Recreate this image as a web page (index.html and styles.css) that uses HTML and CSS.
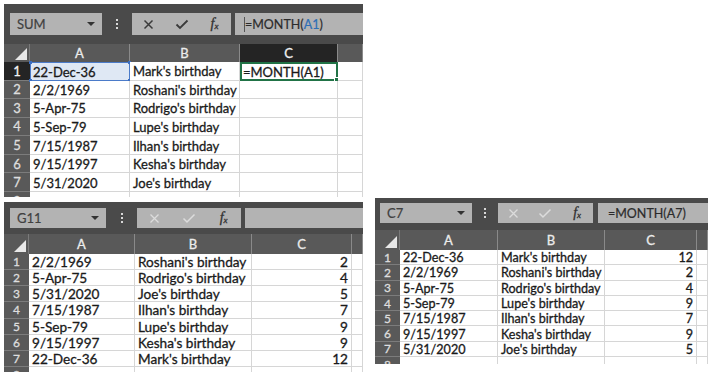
FILE: index.html
```html
<!DOCTYPE html>
<html>
<head>
<meta charset="utf-8">
<link rel="stylesheet" href="styles.css">
</head>
<body>
<div class="page">
  <div class="col-left">
    <!-- Sheet 1 -->
    <div class="sheet s1">
      <div class="fbar">
        <div class="namebox"><span>SUM</span><span class="caret"></span></div>
        <div class="dots"><i></i><i></i><i></i></div>
        <div class="btns">
          <svg class="ico" width="11" height="11" viewBox="0 0 11 11"><path d="M1.5 1.5L9.5 9.5M9.5 1.5L1.5 9.5" stroke="currentColor" stroke-width="1.5" fill="none"/></svg>
          <svg class="ico" width="14" height="11" viewBox="0 0 14 11"><path d="M1.5 5.5L5 9L12.5 1.5" stroke="currentColor" stroke-width="1.8" fill="none"/></svg>
          <span class="fx">f<sub>x</sub></span>
        </div>
        <div class="finput"><span class="cursor"></span>=MONTH(<span class="ref">A1</span>)</div>
      </div>
      <div class="grid">
        <div class="corner"><svg width="12" height="12" viewBox="0 0 12 12"><polygon points="12,0 12,12 0,12" fill="#e8e8e8"/></svg></div>
        <div class="ch">A</div><div class="ch">B</div><div class="ch sel">C</div><div class="ch"></div>

        <div class="rh sel">1</div><div class="c refcell">22-Dec-36<i class="h tl"></i><i class="h tr"></i><i class="h bl"></i><i class="h br"></i></div><div class="c">Mark's birthday</div><div class="c active">=MONTH(A1)<i class="handle"></i></div><div class="c"></div>
        <div class="rh">2</div><div class="c">2/2/1969</div><div class="c">Roshani's birthday</div><div class="c"></div><div class="c"></div>
        <div class="rh">3</div><div class="c">5-Apr-75</div><div class="c">Rodrigo's birthday</div><div class="c"></div><div class="c"></div>
        <div class="rh">4</div><div class="c">5-Sep-79</div><div class="c">Lupe's birthday</div><div class="c"></div><div class="c"></div>
        <div class="rh">5</div><div class="c">7/15/1987</div><div class="c">Ilhan's birthday</div><div class="c"></div><div class="c"></div>
        <div class="rh">6</div><div class="c">9/15/1997</div><div class="c">Kesha's birthday</div><div class="c"></div><div class="c"></div>
        <div class="rh">7</div><div class="c">5/31/2020</div><div class="c">Joe's birthday</div><div class="c"></div><div class="c"></div>
        <div class="rh">8</div><div class="c"></div><div class="c"></div><div class="c"></div><div class="c"></div>
      </div>
    </div>

    <!-- Sheet 2 -->
    <div class="sheet s2">
      <div class="fbar">
        <div class="namebox"><span>G11</span><span class="caret"></span></div>
        <div class="dots"><i></i><i></i><i></i></div>
        <div class="btns dis">
          <svg class="ico" width="11" height="11" viewBox="0 0 11 11"><path d="M1.5 1.5L9.5 9.5M9.5 1.5L1.5 9.5" stroke="currentColor" stroke-width="1.3" fill="none"/></svg>
          <svg class="ico" width="14" height="11" viewBox="0 0 14 11"><path d="M1.5 5.5L5 9L12.5 1.5" stroke="currentColor" stroke-width="1.5" fill="none"/></svg>
          <span class="fx">f<sub>x</sub></span>
        </div>
        <div class="finput"></div>
      </div>
      <div class="grid">
        <div class="corner"><svg width="12" height="12" viewBox="0 0 12 12"><polygon points="12,0 12,12 0,12" fill="#e8e8e8"/></svg></div>
        <div class="ch">A</div><div class="ch">B</div><div class="ch">C</div><div class="ch"></div>

        <div class="rh">1</div><div class="c">2/2/1969</div><div class="c">Roshani's birthday</div><div class="c num">2</div><div class="c"></div>
        <div class="rh">2</div><div class="c">5-Apr-75</div><div class="c">Rodrigo's birthday</div><div class="c num">4</div><div class="c"></div>
        <div class="rh">3</div><div class="c">5/31/2020</div><div class="c">Joe's birthday</div><div class="c num">5</div><div class="c"></div>
        <div class="rh">4</div><div class="c">7/15/1987</div><div class="c">Ilhan's birthday</div><div class="c num">7</div><div class="c"></div>
        <div class="rh">5</div><div class="c">5-Sep-79</div><div class="c">Lupe's birthday</div><div class="c num">9</div><div class="c"></div>
        <div class="rh">6</div><div class="c">9/15/1997</div><div class="c">Kesha's birthday</div><div class="c num">9</div><div class="c"></div>
        <div class="rh">7</div><div class="c">22-Dec-36</div><div class="c">Mark's birthday</div><div class="c num">12</div><div class="c"></div>
        <div class="rh">8</div><div class="c"></div><div class="c"></div><div class="c"></div><div class="c"></div>
      </div>
    </div>
  </div>

  <div class="col-right">
    <!-- Sheet 3 -->
    <div class="sheet s3">
      <div class="fbar">
        <div class="namebox"><span>C7</span><span class="caret"></span></div>
        <div class="dots"><i></i><i></i><i></i></div>
        <div class="btns dis">
          <svg class="ico" width="11" height="11" viewBox="0 0 11 11"><path d="M1.5 1.5L9.5 9.5M9.5 1.5L1.5 9.5" stroke="currentColor" stroke-width="1.3" fill="none"/></svg>
          <svg class="ico" width="14" height="11" viewBox="0 0 14 11"><path d="M1.5 5.5L5 9L12.5 1.5" stroke="currentColor" stroke-width="1.5" fill="none"/></svg>
          <span class="fx">f<sub>x</sub></span>
        </div>
        <div class="finput">=MONTH(A7)</div>
      </div>
      <div class="grid">
        <div class="corner"><svg width="12" height="12" viewBox="0 0 12 12"><polygon points="12,0 12,12 0,12" fill="#e8e8e8"/></svg></div>
        <div class="ch">A</div><div class="ch">B</div><div class="ch">C</div><div class="ch"></div>

        <div class="rh">1</div><div class="c">22-Dec-36</div><div class="c">Mark's birthday</div><div class="c num">12</div><div class="c"></div>
        <div class="rh">2</div><div class="c">2/2/1969</div><div class="c">Roshani's birthday</div><div class="c num">2</div><div class="c"></div>
        <div class="rh">3</div><div class="c">5-Apr-75</div><div class="c">Rodrigo's birthday</div><div class="c num">4</div><div class="c"></div>
        <div class="rh">4</div><div class="c">5-Sep-79</div><div class="c">Lupe's birthday</div><div class="c num">9</div><div class="c"></div>
        <div class="rh">5</div><div class="c">7/15/1987</div><div class="c">Ilhan's birthday</div><div class="c num">7</div><div class="c"></div>
        <div class="rh">6</div><div class="c">9/15/1997</div><div class="c">Kesha's birthday</div><div class="c num">9</div><div class="c"></div>
        <div class="rh">7</div><div class="c">5/31/2020</div><div class="c">Joe's birthday</div><div class="c num">5</div><div class="c"></div>
        <div class="rh">8</div><div class="c"></div><div class="c"></div><div class="c"></div><div class="c"></div>
      </div>
    </div>
  </div>
</div>
</body>
</html>
```

FILE: styles.css
```css
* { box-sizing: border-box; }
html, body { margin: 0; padding: 0; background: #ffffff; }
body { font-family: Lato, "Open Sans", sans-serif; }

.page {
  display: flex;
  gap: 12px;
  padding: 4px 0 0 4px;
}
.col-left { display: flex; flex-direction: column; gap: 5px; width: 359px; }
.col-right { width: 333px; padding-top: 194px; }

.sheet {
  background: #4a4a4a;
  overflow: hidden;
  color: #1a1a1a;
}

/* sizing per sheet */
.s1 { height: 193px; --fs: 13px; --bar-h: 40px; --box-top: 9px; --box-h: 22px; --box-left: 6px;
      --nb-w: 92px; --gap1: 30px; --btn-w: 99px; --gap2: 4px;
      --cols: 26px 100px 110px 98px 1fr; --hh: 18px; --rh: 18.57px; }
.s2 { height: 170px; --fs: 13.6px; --bar-h: 32px; --box-top: 6px; --box-h: 20px; --box-left: 6px;
      --nb-w: 96px; --gap1: 31px; --btn-w: 104px; --gap2: 4px;
      --cols: 25px 106px 117px 100px 1fr; --hh: 20px; --rh: 16.14px; }
.s3 { height: 166px; --fs: 12.6px; --bar-h: 32px; --box-top: 5px; --box-h: 20px; --box-left: 5px;
      --nb-w: 92px; --gap1: 26px; --btn-w: 95px; --gap2: 5px;
      --cols: 25px 98px 107px 92px 1fr; --hh: 20px; --rh: 15.3px; }

/* formula bar */
.fbar {
  height: var(--bar-h);
  display: flex;
  align-items: flex-start;
  padding: var(--box-top) 0 0 var(--box-left);
}
.namebox, .btns, .finput {
  height: var(--box-h);
  background: #b3b3b3;
}
.namebox {
  width: var(--nb-w);
  display: flex;
  align-items: center;
  justify-content: space-between;
  padding: 0 7px 0 7px;
  font-size: 13px;
  color: #404040;
  -webkit-text-stroke: 0.2px #404040;
}
.caret {
  width: 0; height: 0;
  border-left: 4px solid transparent;
  border-right: 4px solid transparent;
  border-top: 4px solid #333;
}
.dots {
  width: var(--gap1);
  height: var(--box-h);
  display: flex;
  flex-direction: column;
  align-items: center;
  justify-content: center;
  gap: 2px;
}
.dots i { display: block; width: 2px; height: 2px; background: #d8d8d8; }
.btns {
  width: var(--btn-w);
  display: grid;
  grid-template-columns: 1fr 1fr 1fr;
  align-items: center;
  justify-items: center;
  color: #3a3a3a;
}
.btns.dis { color: #dcdcdc; }
.ico { display: block; }
.fx {
  font-family: "Liberation Serif", serif;
  font-style: italic;
  font-size: 14px;
  color: #2f2f2f;
  line-height: 1;
  -webkit-text-stroke: 0.3px #2f2f2f;
}
.fx sub { font-size: 9px; vertical-align: -1px; }
.finput {
  flex: 1;
  margin-left: var(--gap2);
  display: flex;
  align-items: center;
  padding-left: 10px;
  font-size: 12.5px;
  color: #2b2b2b;
  -webkit-text-stroke: 0.2px currentColor;
}
.cursor { display: inline-block; width: 1px; height: 15px; background: #555; margin-left: -1px; }
.ref { color: #2e6fb5; }

/* grid */
.grid {
  display: grid;
  grid-template-columns: var(--cols);
  grid-template-rows: var(--hh) repeat(8, var(--rh));
  font-size: var(--fs);
}
.corner {
  background: #595959;
  border-right: 1px solid #7a7a7a;
  display: flex;
  align-items: flex-end;
  justify-content: flex-end;
  padding: 0 2px 2px 0;
}
.ch {
  background: #595959;
  color: #ececec;
  display: flex;
  align-items: center;
  justify-content: center;
  border-right: 1px solid #8a8a8a;
  font-size: 13px;
  -webkit-text-stroke: 0.3px currentColor;
}
.ch.sel { background: #242424; color: #f2f2f2; }
.rh {
  background: #595959;
  color: #dedede;
  display: flex;
  align-items: center;
  justify-content: center;
  border-bottom: 1px solid #7c7c7c;
  font-size: 13px;
  -webkit-text-stroke: 0.3px currentColor;
}
.s2 .rh, .s3 .rh { font-size: 12px; }
.rh.sel { background: #242424; color: #f2f2f2; }
.c {
  background: #ffffff;
  border-right: 1px solid #d6d6d6;
  border-bottom: 1px solid #d6d6d6;
  display: flex;
  align-items: center;
  padding: 1px 3px 0 3px;
  white-space: nowrap;
  position: relative;
  -webkit-text-stroke: 0.3px currentColor;
}
.c.num { justify-content: flex-end; }

.refcell {
  background: #dfe8f4;
  border: 1px solid #4b7bc9;
  padding-left: 2px;
}
.h { position: absolute; width: 3px; height: 3px; background: #3d6fc1; }
.h.tl { left: -2px; top: -2px; }
.h.tr { right: -2px; top: -2px; }
.h.bl { left: -2px; bottom: -2px; }
.h.br { right: -2px; bottom: -2px; }

.active {
  border: 2px solid #217346;
  padding-left: 1px;
}
.handle {
  position: absolute;
  right: -3px; bottom: -3px;
  width: 5px; height: 5px;
  background: #217346;
  border: 1px solid #fff;
}
```
